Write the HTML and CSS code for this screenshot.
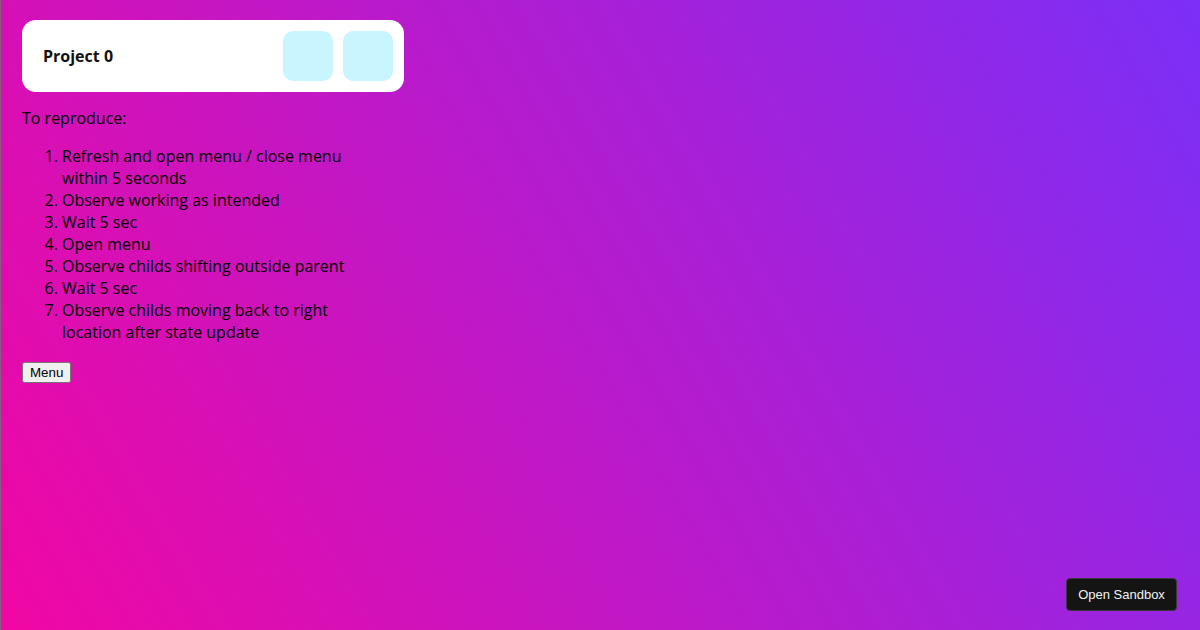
FILE: index.html
```html
<!DOCTYPE html>
<html lang="en">
<head>
<meta charset="utf-8">
<title>Project</title>
<link rel="stylesheet" href="styles.css">
</head>
<body>
<div class="frame">
  <div class="card">
    <div class="card-title">Project 0</div>
    <div class="card-actions">
      <div class="tile"></div>
      <div class="tile"></div>
    </div>
  </div>
  <div class="notes">
    <p class="intro">To reproduce:</p>
    <ol class="steps">
      <li>Refresh and open menu / close menu within 5 seconds</li>
      <li>Observe working as intended</li>
      <li>Wait 5 sec</li>
      <li>Open menu</li>
      <li>Observe childs shifting outside parent</li>
      <li>Wait 5 sec</li>
      <li>Observe childs moving back to right location after state update</li>
    </ol>
  </div>
  <button class="menu-btn" type="button">Menu</button>
</div>
<a class="sandbox-btn" href="#">Open Sandbox</a>
</body>
</html>
```

FILE: styles.css
```css
html, body {
  height: 100%;
}
body {
  margin: 0;
  font-family: "Open Sans", "DejaVu Sans", sans-serif;
  font-size: 16px;
  line-height: 22px;
  color: #000;
  background: linear-gradient(60deg, #f107a3 0%, #7b2ff7 100%);
  overflow: hidden;
}
.frame {
  box-sizing: border-box;
  height: 100%;
  border-left: 1px solid #8c5a86;
  padding: 20px 21px;
}
.card {
  box-sizing: border-box;
  width: 382px;
  height: 72px;
  background: #fff;
  border-radius: 14px;
  display: flex;
  align-items: center;
  justify-content: space-between;
  padding: 0 11px 0 21px;
}
.card-title {
  font-weight: 700;
  color: #111;
}
.card-actions {
  display: flex;
  gap: 10px;
}
.tile {
  width: 50px;
  height: 50px;
  border-radius: 10px;
  background: #c9f6fe;
}
.notes {
  width: 350px;
}
.intro {
  margin: 15px 0 16px;
}
.steps {
  margin: 0 0 19px;
  padding-left: 40px;
}
.menu-btn {
  display: block;
  font-family: "Liberation Sans", Arial, sans-serif;
  font-size: 13.33px;
}
.sandbox-btn {
  position: fixed;
  right: 23px;
  bottom: 19px;
  box-sizing: border-box;
  height: 33px;
  width: 111px;
  display: flex;
  align-items: center;
  justify-content: center;
  background: #141414;
  border: 1px solid #3a3a3a;
  border-radius: 4px;
  color: #f2f2f2;
  font-family: "Liberation Sans", Arial, sans-serif;
  font-size: 13px;
  text-decoration: none;
}
```
